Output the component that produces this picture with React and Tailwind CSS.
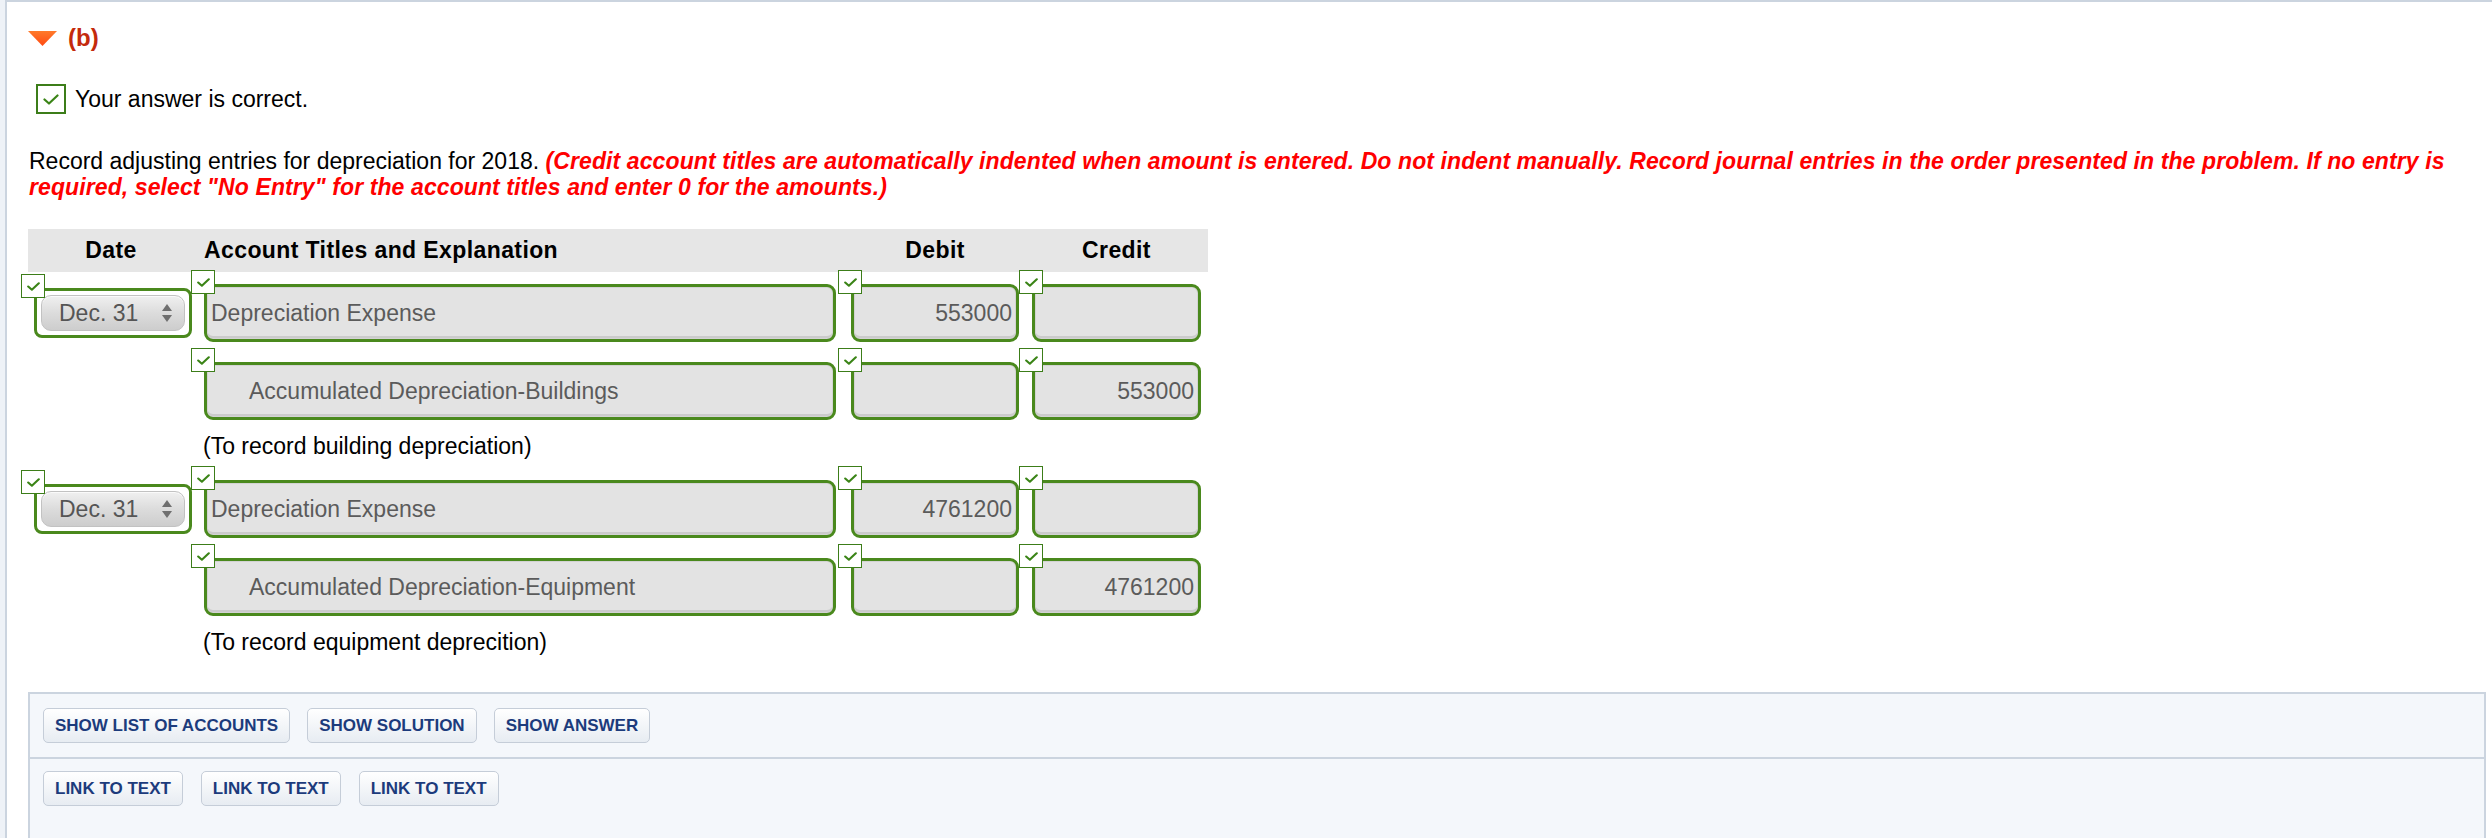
const entries = [
  {
    date: 'Dec. 31',
    lines: [
      { account: 'Depreciation Expense', debit: '553000', credit: '' },
      { account: 'Accumulated Depreciation-Buildings', debit: '', credit: '553000', indent: true },
    ],
    memo: '(To record building depreciation)',
  },
  {
    date: 'Dec. 31',
    lines: [
      { account: 'Depreciation Expense', debit: '4761200', credit: '' },
      { account: 'Accumulated Depreciation-Equipment', debit: '', credit: '4761200', indent: true },
    ],
    memo: '(To record equipment deprecition)',
  },
];

const CheckMark = ({ className, width = 2.4 }) => (
  <svg viewBox="0 0 16 11" className={className} fill="none">
    <path d="M1.5 5.5 L6 9.5 L14.5 1.5" stroke="#3a8416" strokeWidth={width} strokeLinecap="round" strokeLinejoin="round" />
  </svg>
);

const Badge = () => (
  <div className="absolute -left-[13px] -top-[14px] z-10 flex h-[24px] w-[24px] items-center justify-center border-[1.5px] border-[#3c7d19] bg-white">
    <CheckMark className="w-[13px] h-[9px]" width={2.6} />
  </div>
);

const Field = ({ value, align = 'left', indent, className = '' }) => (
  <div className={`relative ${className}`}>
    <Badge />
    <div className="h-[58px] rounded-[9px] border-[3px] border-[#4a891d] bg-[#e3e3e3] shadow-[inset_0_0_0_1px_#d3d3d3,inset_0_-3px_0_#cbcbcb] flex items-center">
      <span
        className={`w-full text-[#5b5b5b] ${align === 'right' ? 'text-right pr-[4px]' : indent ? 'pl-[42px]' : 'pl-[4px]'}`}
      >
        {value}
      </span>
    </div>
  </div>
);

const DateField = ({ value }) => (
  <div className="relative ml-[6px] w-[158px] self-center">
    <Badge />
    <div className="h-[50px] rounded-[8px] border-[3px] border-[#4a891d] bg-white p-[4px]">
      <div className="flex h-full items-center justify-between rounded-[10px] border border-[#c2c2c2] bg-gradient-to-b from-[#f0f0f0] via-[#dcdcdc] to-[#cdcdcd] shadow-[inset_0_1px_0_#fafafa] pl-[17px] pr-[12px] text-[#555]">
        <span>{value}</span>
        <svg viewBox="0 0 10 18" className="w-[10px] h-[18px]">
          <path d="M5 0 L10 7 L0 7 Z" fill="#6f6f6f" />
          <path d="M0 11 L10 11 L5 18 Z" fill="#6f6f6f" />
        </svg>
      </div>
    </div>
  </div>
);

const ActionButton = ({ label }) => (
  <button
    type="button"
    className="h-[35px] rounded-[5px] border border-[#c5cdd8] bg-gradient-to-b from-white to-[#e7ecf2] px-[11px] text-[17px] font-bold text-[#1c3b7c]"
  >
    {label}
  </button>
);

export default function App() {
  return (
    <div className="h-[838px] overflow-hidden bg-[#eef2f7] pl-[5px] font-['Liberation_Sans',Arial,sans-serif] text-[23px] text-black">
      <div className="h-full border-l-2 border-t-2 border-[#cbd4df] bg-white pl-[21px] pr-[6px]">
        <div className="mt-[24px] flex h-[24px] items-center gap-[11px]">
          <svg viewBox="0 0 29 15" className="w-[29px] h-[15px]">
            <defs>
              <linearGradient id="tri" x1="0" y1="0" x2="0" y2="1">
                <stop offset="0" stopColor="#ff7a2a" />
                <stop offset="1" stopColor="#ff4a12" />
              </linearGradient>
            </defs>
            <path d="M0 0 L29 0 L14.5 15 Z" fill="url(#tri)" />
          </svg>
          <span className="text-[24px] font-bold text-[#c42a0c]">(b)</span>
        </div>

        <div className="mt-[34px] flex h-[30px] items-center">
          <div className="ml-[8px] flex h-[30px] w-[30px] items-center justify-center border-2 border-[#3c7d19] bg-white">
            <CheckMark className="w-[16px] h-[11px]" width={2.2} />
          </div>
          <span className="ml-[9px]">Your answer is correct.</span>
        </div>

        <p className="mt-[34px] pl-[1px] leading-[26px]">
          Record adjusting entries for depreciation for 2018.{' '}
          <span className="font-bold italic tracking-[0.1px] text-[#ff0000]">
            (Credit account titles are automatically indented when amount is entered. Do not indent manually. Record journal
            entries in the order presented in the problem. If no entry is required, select "No Entry" for the account titles
            and enter 0 for the amounts.)
          </span>
        </p>

        <div className="mt-[29px] w-[1180px]">
          <div className="flex h-[43px] items-center bg-[#e6e6e6] font-bold tracking-[0.4px]">
            <div className="w-[176px] pr-[10px] text-center">Date</div>
            <div className="w-[647px]">Account Titles and Explanation</div>
            <div className="w-[168px] text-center">Debit</div>
            <div className="ml-[13px] w-[169px] text-center">Credit</div>
          </div>

          {entries.map((entry, i) => (
            <div key={i}>
              {entry.lines.map((line, j) => (
                <div key={j} className={`flex ${i === 0 && j === 0 ? 'mt-[12px]' : 'mt-[20px]'}`}>
                  <div className="flex w-[176px]">{j === 0 && <DateField value={entry.date} />}</div>
                  <Field className="w-[632px]" value={line.account} indent={line.indent} />
                  <Field className="ml-[15px] w-[168px]" value={line.debit} align="right" />
                  <Field className="ml-[13px] w-[169px]" value={line.credit} align="right" />
                </div>
              ))}
              <div className="mt-[13px] h-[27px] pl-[175px] leading-[27px]">{entry.memo}</div>
            </div>
          ))}
        </div>

        <div className="mt-[36px] border-2 border-[#cbd4df] bg-[#f4f7fb]">
          <div className="flex gap-[17px] px-[13px] pt-[14px] pb-[14px] border-b-2 border-[#cbd4df]">
            <ActionButton label="SHOW LIST OF ACCOUNTS" />
            <ActionButton label="SHOW SOLUTION" />
            <ActionButton label="SHOW ANSWER" />
          </div>
          <div className="flex gap-[18px] px-[13px] pt-[12px] pb-[40px]">
            <ActionButton label="LINK TO TEXT" />
            <ActionButton label="LINK TO TEXT" />
            <ActionButton label="LINK TO TEXT" />
          </div>
        </div>
      </div>
    </div>
  );
}
